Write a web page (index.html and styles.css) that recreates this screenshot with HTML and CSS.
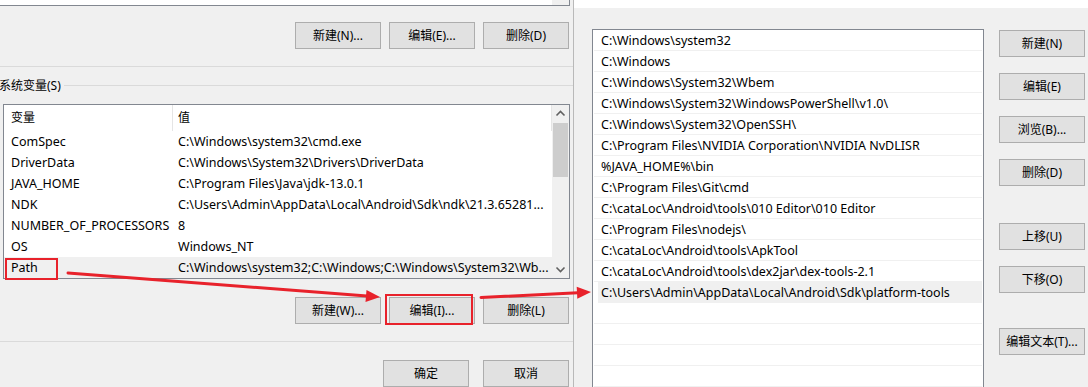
FILE: index.html
```html
<!DOCTYPE html>
<html lang="zh-CN">
<head>
<meta charset="utf-8">
<title>环境变量</title>
<link rel="stylesheet" href="styles.css">
</head>
<body>
<div class="screen">
  <section class="left">
    <div class="top-list"><div class="top-list-body"></div><div class="top-list-scroll"></div></div>
    <div class="btn-row row1">
      <button class="btn">新建(N)...</button>
      <button class="btn">编辑(E)...</button>
      <button class="btn">删除(D)</button>
    </div>
    <div class="hsep sep1"></div>
    <div class="group-title"><span class="group-text">系统变量(S)</span><i class="group-line"></i></div>
    <div class="listbox">
      <div class="list-main">
        <div class="lv-head"><div class="c1">变量</div><div class="c2">值</div></div>
        <div class="lv-row"><div class="c1">ComSpec</div><div class="c2">C:\Windows\system32\cmd.exe</div></div>
        <div class="lv-row"><div class="c1">DriverData</div><div class="c2">C:\Windows\System32\Drivers\DriverData</div></div>
        <div class="lv-row"><div class="c1">JAVA_HOME</div><div class="c2">C:\Program Files\Java\jdk-13.0.1</div></div>
        <div class="lv-row"><div class="c1">NDK</div><div class="c2">C:\Users\Admin\AppData\Local\Android\Sdk\ndk\21.3.65281...</div></div>
        <div class="lv-row"><div class="c1">NUMBER_OF_PROCESSORS</div><div class="c2">8</div></div>
        <div class="lv-row"><div class="c1">OS</div><div class="c2">Windows_NT</div></div>
        <div class="lv-row sel"><div class="c1">Path</div><div class="c2">C:\Windows\system32;C:\Windows;C:\Windows\System32\Wb...</div></div>
      </div>
      <div class="vscroll">
        <svg class="chev" width="17" height="17" viewBox="0 0 17 17"><path d="M4.5 10.5 L8.5 6.5 L12.5 10.5" fill="none" stroke="#606060" stroke-width="1.6"/></svg>
        <div class="track"><div class="thumb"></div></div>
        <svg class="chev" width="17" height="17" viewBox="0 0 17 17"><path d="M4.5 6.5 L8.5 10.5 L12.5 6.5" fill="none" stroke="#606060" stroke-width="1.6"/></svg>
      </div>
    </div>
    <div class="btn-row row2">
      <button class="btn">新建(W)...</button>
      <button class="btn">编辑(I)...</button>
      <button class="btn">删除(L)</button>
    </div>
    <div class="hsep sep2"></div>
    <div class="btn-row row3">
      <button class="btn">确定</button>
      <button class="btn">取消</button>
    </div>
  </section>
  <div class="vdivider"></div>
  <section class="right">
    <div class="title-strip"></div>
    <div class="right-body">
      <div class="path-list">
        <div class="p-row">C:\Windows\system32</div>
        <div class="p-row">C:\Windows</div>
        <div class="p-row">C:\Windows\System32\Wbem</div>
        <div class="p-row">C:\Windows\System32\WindowsPowerShell\v1.0\</div>
        <div class="p-row">C:\Windows\System32\OpenSSH\</div>
        <div class="p-row">C:\Program Files\NVIDIA Corporation\NVIDIA NvDLISR</div>
        <div class="p-row">%JAVA_HOME%\bin</div>
        <div class="p-row">C:\Program Files\Git\cmd</div>
        <div class="p-row">C:\cataLoc\Android\tools\010 Editor\010 Editor</div>
        <div class="p-row">C:\Program Files\nodejs\</div>
        <div class="p-row">C:\cataLoc\Android\tools\ApkTool</div>
        <div class="p-row">C:\cataLoc\Android\tools\dex2jar\dex-tools-2.1</div>
        <div class="p-row sel">C:\Users\Admin\AppData\Local\Android\Sdk\platform-tools</div>
        <div class="p-row"></div>
        <div class="p-row"></div>
        <div class="p-row"></div>
        <div class="p-row"></div>
      </div>
      <div class="side-btns">
        <button class="btn">新建(N)</button>
        <button class="btn">编辑(E)</button>
        <button class="btn">浏览(B)...</button>
        <button class="btn">删除(D)</button>
        <button class="btn gap-a">上移(U)</button>
        <button class="btn">下移(O)</button>
        <button class="btn gap-b">编辑文本(T)...</button>
      </div>
    </div>
  </section>
  <svg class="annot" width="1088" height="387" viewBox="0 0 1088 387">
    <g fill="none" stroke="#e8222b" stroke-width="2">
      <rect x="6" y="259" width="51" height="20"/>
      <rect x="386" y="295" width="86" height="29"/>
    </g>
    <g stroke="#e8222b" stroke-width="3" stroke-linecap="round">
      <line x1="68" y1="273" x2="367" y2="295.9"/>
      <line x1="481" y1="297.5" x2="578" y2="292.7"/>
    </g>
    <g fill="#e8222b">
      <polygon points="380,297 366.5,289.9 365.5,301.9"/>
      <polygon points="591,292 577.3,298.7 576.7,286.8"/>
    </g>
  </svg>
</div>
</body>
</html>
```
FILE: styles.css
```css
* {
  box-sizing: border-box;
  margin: 0;
  padding: 0;
}

html,
body {
  width: 1088px;
  height: 387px;
  overflow: hidden;
}

body {
  background: #f0f0f0;
  font-family: "Noto Sans", "Noto Sans CJK SC", sans-serif;
  font-size: 12.5px;
  color: #000;
}

.screen {
  position: relative;
  display: flex;
  width: 1088px;
  height: 387px;
}

/* ---------- left dialog ---------- */
.left {
  width: 573px;
  flex: none;
  display: flex;
  flex-direction: column;
}

.top-list {
  width: 570px;
  height: 6px;
  flex: none;
  display: flex;
  background: #fff;
  border-right: 1px solid #828790;
  border-bottom: 1px solid #828790;
}

.top-list-body {
  flex: 1;
}

.top-list-scroll {
  width: 17px;
  background: #f0f0f0;
}

.btn-row {
  display: flex;
  flex: none;
  justify-content: flex-end;
  gap: 8px;
  padding-right: 4px;
}

.row1 {
  margin-top: 16px;
}

.row2 {
  margin-top: 18px;
}

.row3 {
  margin-top: 18px;
  gap: 14px;
}

.btn {
  width: 86px;
  height: 27px;
  flex: none;
  background: #e1e1e1;
  border: 1px solid #adadad;
  font: inherit;
  font-size: 12px;
  color: #000;
  text-align: center;
  line-height: 25px;
}

.hsep {
  height: 1px;
  flex: none;
  background: #dadada;
}

.sep1 {
  margin-top: 17px;
}

.sep2 {
  margin-top: 17px;
}

.group-title {
  margin-top: 10px;
  height: 17px;
  flex: none;
  display: flex;
  align-items: center;
  font-size: 12px;
}

.group-text {
  margin-left: -1px;
  padding-right: 3px;
  line-height: 17px;
}

.group-line {
  flex: 1;
  height: 1px;
  background: #dadada;
}

.listbox {
  margin-top: 10px;
  margin-left: 3px;
  width: 567px;
  height: 175px;
  flex: none;
  display: flex;
  background: #fff;
  border: 1px solid #828790;
}

.list-main {
  flex: 1;
  min-width: 0;
  display: flex;
  flex-direction: column;
}

.lv-head,
.lv-row {
  display: flex;
  flex: none;
  white-space: nowrap;
}

.lv-head {
  height: 26px;
  line-height: 26px;
  font-size: 12px;
}

.lv-head .c1,
.lv-head .c2 {
  border-right: 1px solid #e5e5e5;
}

.lv-row {
  height: 21px;
  line-height: 21px;
}

.c1 {
  width: 169px;
  flex: none;
  padding-left: 7px;
  overflow: hidden;
}

.c2 {
  flex: 1;
  padding-left: 5px;
  overflow: hidden;
}

.lv-row.sel {
  background: #f0f0f0;
}

.vscroll {
  width: 17px;
  flex: none;
  display: flex;
  flex-direction: column;
  background: #f0f0f0;
}

.chev {
  display: block;
  flex: none;
}

.track {
  flex: 1;
  padding: 1px 1px;
}

.thumb {
  height: 54px;
  background: #cdcdcd;
}

.vdivider {
  width: 1px;
  flex: none;
  background: #b9b9b9;
}

/* ---------- right dialog ---------- */
.right {
  flex: 1;
  display: flex;
  flex-direction: column;
  overflow: hidden;
}

.title-strip {
  height: 8px;
  flex: none;
  background: #fff;
}

.right-body {
  display: flex;
  flex: none;
  padding-left: 18px;
}

.path-list {
  margin-top: 21px;
  width: 392px;
  height: 372px;
  flex: none;
  background: #fff;
  border: 1px solid #828790;
  padding: 0 1px;
}

.p-row {
  height: 21px;
  padding-top: 2px;
  line-height: 18px;
  padding-left: 7px;
  border-bottom: 1px solid #f0f0f0;
  white-space: nowrap;
}

.p-row.sel {
  background: #f0f0f0;
  margin-left: 4px;
  padding-left: 3px;
}

.side-btns {
  margin-left: 15px;
  margin-top: 22px;
  display: flex;
  flex-direction: column;
  gap: 16px;
}

.gap-a {
  margin-top: 21px;
}

.gap-b {
  margin-top: 19px;
}

.annot {
  position: absolute;
  left: 0;
  top: 0;
  pointer-events: none;
}
```
